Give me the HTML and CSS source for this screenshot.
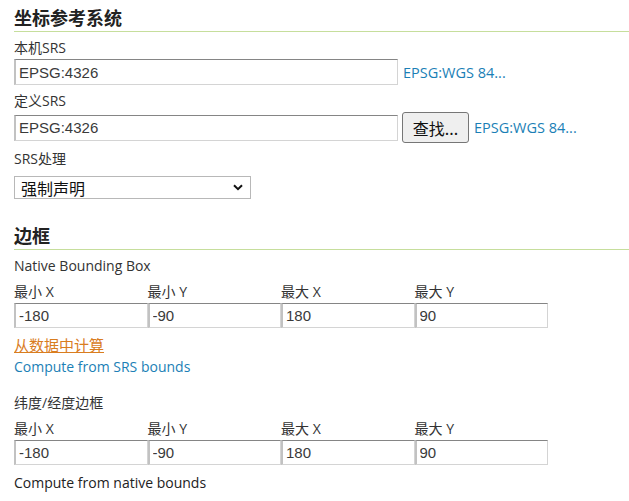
FILE: index.html
```html
<!DOCTYPE html>
<html>
<head>
<meta charset="utf-8">
<link rel="stylesheet" href="styles.css">
</head>
<body>
<div class="page">
  <h2 class="section-title">坐标参考系统</h2>
  <div class="field">
    <label class="label">本机SRS</label>
    <div class="row">
      <input class="text-input srs-input" type="text" value="EPSG:4326">
      <a class="link" href="#">EPSG:WGS 84...</a>
    </div>
  </div>
  <div class="field">
    <label class="label">定义SRS</label>
    <div class="row">
      <input class="text-input srs-input" type="text" value="EPSG:4326">
      <button class="button" type="button">查找...</button>
      <a class="link" href="#">EPSG:WGS 84...</a>
    </div>
  </div>
  <div class="field">
    <label class="label label-gap">SRS处理</label>
    <div class="select">
      <span class="select-value">强制声明</span>
      <svg class="chevron" width="10" height="7" viewBox="0 0 10 7"><path d="M1 1.2 L5 5.2 L9 1.2" fill="none" stroke="#111" stroke-width="2"/></svg>
    </div>
  </div>

  <h2 class="section-title section-second">边框</h2>
  <div class="sub-title">Native Bounding Box</div>
  <div class="bbox">
    <div class="cell"><label class="label">最小 X</label><input class="text-input" type="text" value="-180"></div>
    <div class="cell"><label class="label">最小 Y</label><input class="text-input" type="text" value="-90"></div>
    <div class="cell"><label class="label">最大 X</label><input class="text-input" type="text" value="180"></div>
    <div class="cell"><label class="label">最大 Y</label><input class="text-input" type="text" value="90"></div>
  </div>
  <a class="orange-link" href="#">从数据中计算</a>
  <a class="link block-link" href="#">Compute from SRS bounds</a>

  <div class="sub-title sub-second">纬度/经度边框</div>
  <div class="bbox">
    <div class="cell"><label class="label">最小 X</label><input class="text-input" type="text" value="-180"></div>
    <div class="cell"><label class="label">最小 Y</label><input class="text-input" type="text" value="-90"></div>
    <div class="cell"><label class="label">最大 X</label><input class="text-input" type="text" value="180"></div>
    <div class="cell"><label class="label">最大 Y</label><input class="text-input" type="text" value="90"></div>
  </div>
  <div class="plain-text">Compute from native bounds</div>
</div>
</body>
</html>
```

FILE: styles.css
```css
html, body {
  margin: 0;
  padding: 0;
  background: #fff;
}
body {
  font-family: "Open Sans", "Noto Sans CJK SC", sans-serif;
  font-size: 14px;
  color: #333;
}
.page {
  padding: 6px 0 0 14px;
}
.section-title {
  margin: 0;
  font-size: 18px;
  line-height: 24px;
  font-weight: bold;
  color: #222;
  border-bottom: 1px solid #c6de9c;
  padding-bottom: 1px;
}
.section-second {
  margin-top: 25px;
}
.field {
  display: flex;
  flex-direction: column;
}
.label {
  display: block;
  line-height: 20px;
  color: #333;
}
.field .label {
  margin-top: 6px;
  margin-bottom: 1px;
}
.field .label-gap {
  margin-bottom: 7px;
}
.row {
  display: flex;
  align-items: center;
  gap: 5px;
}
.text-input {
  box-sizing: border-box;
  height: 26px;
  margin: 0;
  padding: 0 3px;
  font-family: "Liberation Sans", Arial, sans-serif;
  font-size: 15px;
  color: #3a3a3a;
  background: #fff;
  border-style: solid;
  border-width: 1px 1px 1px 2px;
  border-color: #858585 #d4d4d4 #d4d4d4 #c2c2c2;
  outline: none;
}
.srs-input {
  width: 384px;
}
.link {
  color: #1b7fb6;
  text-decoration: none;
}
.row .link {
  font-size: 14.5px;
}
.button {
  box-sizing: border-box;
  height: 31px;
  width: 67px;
  margin: 0 0 0 -1px;
  padding: 0;
  font-family: "Noto Sans CJK SC", sans-serif;
  font-size: 16px;
  color: #111;
  background: #efefef;
  border: 1px solid #767676;
  border-radius: 3px;
}
.select {
  box-sizing: border-box;
  width: 237px;
  height: 23px;
  display: flex;
  align-items: center;
  justify-content: space-between;
  padding: 0 7px 0 6px;
  border: 1px solid #b8b8b8;
  font-family: "Noto Sans CJK SC", sans-serif;
  font-size: 16px;
  color: #111;
}
.chevron {
  display: block;
}
.sub-title {
  line-height: 20px;
  margin-top: 6px;
}
.sub-second {
  margin-top: 16px;
}
.bbox {
  display: grid;
  grid-template-columns: repeat(4, 133.5px);
  margin-top: 6px;
}
.cell {
  display: flex;
  flex-direction: column;
}
.cell .label {
  margin-bottom: 1px;
}
.cell .text-input {
  width: 100%;
  height: 25px;
}
.orange-link {
  display: block;
  width: max-content;
  margin-top: 7px;
  line-height: 20px;
  font-size: 15px;
  color: #d97d1f;
  text-decoration: underline;
}
.block-link {
  display: block;
  width: max-content;
  margin-top: 2px;
  line-height: 20px;
}
.plain-text {
  margin-top: 8px;
  line-height: 20px;
  color: #222;
}
```
